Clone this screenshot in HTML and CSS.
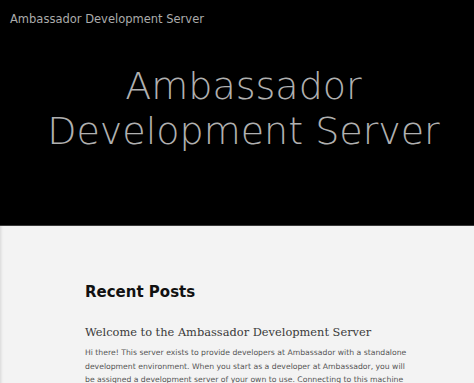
FILE: index.html
```html
<!DOCTYPE html>
<html>
<head>
<meta charset="utf-8">
<link rel="stylesheet" href="styles.css">
</head>
<body>
<header class="hero">
  <nav class="nav"><span class="brand">Ambassador Development Server</span></nav>
  <h1 class="hero-title">Ambassador<br>Development Server</h1>
</header>
<main class="content">
  <h2 class="section-title">Recent Posts</h2>
  <article class="post">
    <h3 class="post-title">Welcome to the Ambassador Development Server</h3>
    <p class="post-body">Hi there! This server exists to provide developers at Ambassador with a standalone development environment. When you start as a developer at Ambassador, you will be assigned a development server of your own to use. Connecting to this machine requires an SSH key.</p>
  </article>
</main>
</body>
</html>
```
FILE: styles.css
```css
html, body { margin: 0; padding: 0; }
body { background: #f3f3f3; font-family: "DejaVu Sans", sans-serif; overflow: hidden; height: 383px; }
.hero { background: #000; height: 225px; border-bottom: 1px solid #3a3a3a; }
.nav { padding: 8px 10px 0; height: 29px; }
.brand { color: #ababab; font-size: 11.5px; line-height: 14px; }
.hero-title { margin: 27px 0 0; padding-left: 13px; text-align: center; color: #b0b0b0; font-weight: 200; font-size: 38px; line-height: 45px; }
.content { padding: 57px 0 0 85px; width: 325px; height: 200px; box-shadow: inset 3px 0 3px -2px rgba(0,0,0,0.12); }
.section-title { margin: 0; font-size: 15px; font-weight: bold; color: #111; line-height: 18px; }
.post { margin-top: 24px; }
.post-title { margin: 0; font-family: "DejaVu Serif", serif; font-weight: normal; font-size: 11.4px; line-height: 14px; color: #3a3a3a; }
.post-body { margin: 7px 0 0; font-size: 7.7px; line-height: 13.7px; color: #555; }
```
